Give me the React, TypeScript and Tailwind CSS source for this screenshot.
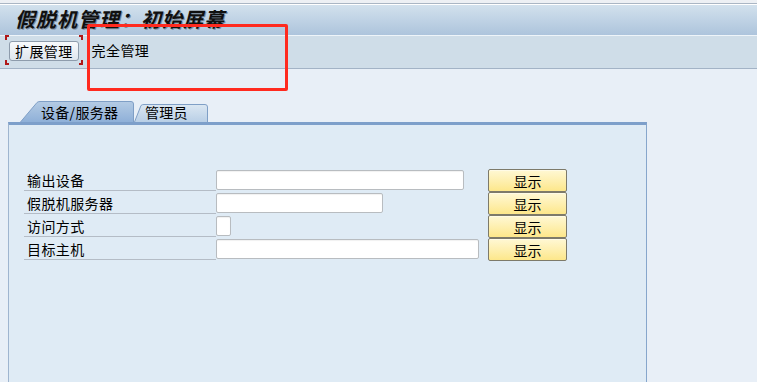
import React, { FC } from 'react';

const cjk = "font-['Noto_Sans_CJK_SC','Noto_Sans',sans-serif]";

interface IRowProps {
    label: string;
    inputWidth: string;
}

const FieldRow: FC<IRowProps> = ({ label, inputWidth }) => (
    <div className="flex h-[23px] items-stretch">
        <div className="w-[192px] h-[22px] flex items-center pl-[3px] border-b border-[#b4bcc6] text-[14px] leading-[18px] tracking-[0.4px] text-black">
            {label}
        </div>
        <div className="w-[272px] flex items-start pt-[1px]">
            <div className={inputWidth + " h-[20px] bg-white border border-[#b8bcc0] rounded-[2px] shadow-[inset_0_1px_1px_rgba(0,0,0,0.06)]"} />
        </div>
        <button className="w-[79px] h-[23px] border border-[#7d7a6a] rounded-[2px] bg-gradient-to-b from-[#fff8d4] to-[#fde78a] text-[14px] leading-[20px] text-black shadow-[inset_0_1px_0_#fffbe6]">
            显示
        </button>
    </div>
);

const Tab: FC<{ label: string; active?: boolean; w: number; h: number; slant: number }> = ({ label, active, w, h, slant }) => (
    <div className="relative" style={{ width: w, height: h }}>
        <svg className="absolute inset-0" width={w} height={h} viewBox={`0 0 ${w} ${h}`}>
            <defs>
                <linearGradient id={'g' + label} x1="0" y1="0" x2="0" y2="1">
                    <stop offset="0" stopColor={active ? '#b4cbe4' : '#dbe7f2'} />
                    <stop offset="1" stopColor={active ? '#8fb0d8' : '#b9cfe6'} />
                </linearGradient>
            </defs>
            <path
                d={`M0.5 ${h} L${slant} 1.5 Q${slant + 1} 0.5 ${slant + 3} 0.5 L${w - 3} 0.5 Q${w - 0.5} 0.5 ${w - 0.5} 3 L${w - 0.5} ${h}`}
                fill={`url(#g${label})`}
                stroke="#7f9fc6"
                strokeWidth="1"
            />
        </svg>
        <span className="absolute bottom-[1px] text-[14px] leading-[18px] text-black tracking-[0.3px]" style={{ left: slant + 4 }}>
            {label}
        </span>
    </div>
);

const Corner: FC<{ pos: string }> = ({ pos }) => (
    <span className={"absolute w-[4px] h-[5px] border-[#b01818] " + pos} />
);

export default function App() {
    return (
        <div className={cjk + " w-[757px] h-[382px] overflow-hidden bg-[#e8eff7] relative"}>
            {/* title */}
            <div className="h-[4px] bg-[#edf0f4] border-b border-[#aab6c4]" />
            <div className="h-[31px] border-t border-white bg-gradient-to-b from-[#d2e1ed] to-[#adc4dc] flex items-center pl-[15px] pb-[2px]">
                <span className="text-[20px] font-bold italic leading-none text-[#101010] tracking-[1px] [text-shadow:1px_1px_0_#7f8fa0]">
                    假脱机管理：初始屏幕
                </span>
            </div>
            {/* toolbar */}
            <div className="h-[34px] border-t border-[#eef4f9] border-b border-b-[#a3b3c6] bg-[#cfdde8] flex items-center pl-[9px] pb-[4px] gap-[13px]">
                <div className="relative">
                    <Corner pos="-left-[4px] -top-[3px] border-l-2 border-t-2" />
                    <Corner pos="-left-[4px] -bottom-[3px] border-l-2 border-b-2" />
                    <Corner pos="-right-[4px] -top-[3px] border-r-2 border-t-2" />
                    <Corner pos="-right-[4px] -bottom-[3px] border-r-2 border-b-2" />
                    <button className="h-[20px] px-[5px] border border-[#8e9cac] rounded-[3px] bg-gradient-to-b from-[#f8fafc] to-[#dfe6ee] text-[14px] leading-[18px] text-black tracking-[0.4px]">
                        扩展管理
                    </button>
                </div>
                <span className="text-[14px] text-black tracking-[0.4px]">完全管理</span>
            </div>

            {/* red annotation frame */}
            <div className="absolute left-[87px] top-[24px] w-[201px] h-[67px] border-[3px] border-[#ff2a1f] rounded-[2px]" />

            {/* tabstrip */}
            <div className="mt-[32px] ml-[8px] w-[639px]">
                <div className="flex items-end pl-[12px] h-[21px]">
                    <Tab label="设备/服务器" active w={114} h={21} slant={17} />
                    <Tab label="管理员" w={74} h={18} slant={7} />
                </div>
                <div className="h-[262px] border-t-[3px] border-t-[#7d9fca] border-l border-l-[#9fb5cf] border-r border-r-[#86a6cc] bg-[#dfebf5] pt-[44px] pl-[15px]">
                    <FieldRow label="输出设备" inputWidth="w-[248px]" />
                    <FieldRow label="假脱机服务器" inputWidth="w-[167px]" />
                    <FieldRow label="访问方式" inputWidth="w-[15px]" />
                    <FieldRow label="目标主机" inputWidth="w-[263px]" />
                </div>
            </div>
        </div>
    );
}
